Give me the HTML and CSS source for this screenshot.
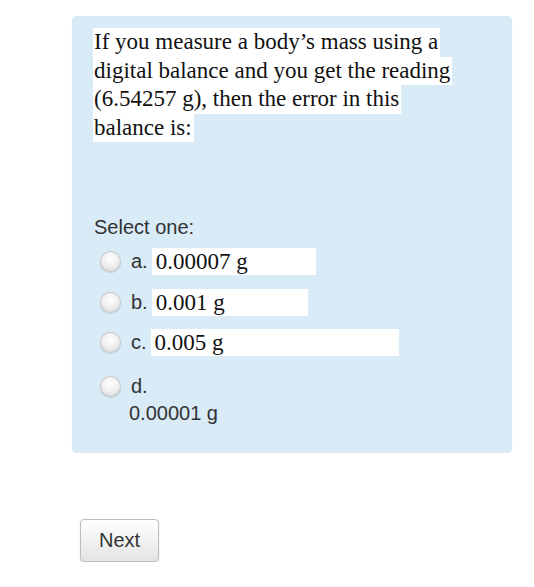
FILE: index.html
```html
<!DOCTYPE html>
<html>
<head>
<meta charset="utf-8">
<link rel="stylesheet" href="styles.css">
</head>
<body>
<div class="page">
  <div class="panel">
    <div class="question">
      <span class="qline">If you measure a body’s mass using a</span>
      <span class="qline">digital balance and you get the reading</span>
      <span class="qline">(6.54257 g), then the error in this</span>
      <span class="qline">balance is:</span>
    </div>
    <div class="prompt">Select one:</div>
    <div class="options">
      <div class="opt">
        <span class="radio"></span>
        <span class="lbl">a.</span><span class="ans w-a">0.00007 g</span>
      </div>
      <div class="opt">
        <span class="radio"></span>
        <span class="lbl">b.</span><span class="ans w-b">0.001 g</span>
      </div>
      <div class="opt">
        <span class="radio"></span>
        <span class="lbl">c.</span><span class="ans w-c">0.005 g</span>
      </div>
      <div class="opt opt-d">
        <span class="radio"></span>
        <div class="dlabel">
          <span class="lbl">d.</span>
          <span class="plain">0.00001 g</span>
        </div>
      </div>
    </div>
  </div>
  <button class="next">Next</button>
</div>
</body>
</html>
```
FILE: styles.css
```css
html, body {
  margin: 0;
  padding: 0;
  background: #ffffff;
}
.page {
  padding: 16px 0 0 72px;
  font-family: "Liberation Sans", Arial, sans-serif;
}
.panel {
  box-sizing: border-box;
  width: 440px;
  height: 436px;
  background: #d8ebf7;
  border-radius: 5px;
  padding: 12px 22px 0 21px;
  box-shadow: 0 1px 1px rgba(120, 150, 170, 0.25);
}
.question {
  display: flex;
  flex-direction: column;
  align-items: flex-start;
  font-family: "Liberation Serif", "Times New Roman", serif;
  font-size: 23px;
  color: #111111;
}
.qline {
  display: block;
  background: #ffffff;
  line-height: 28.5px;
  padding: 0 2px 0 1px;
}
.prompt {
  margin-top: 73px;
  font-size: 20px;
  line-height: 24px;
  color: #333333;
  padding-left: 1px;
}
.options {
  margin-top: 9px;
  display: flex;
  flex-direction: column;
  gap: 13.5px;
  padding-left: 7px;
}
.opt {
  display: flex;
  align-items: flex-start;
  height: 27px;
}
.opt-d {
  margin-top: 3px;
  height: auto;
}
.radio {
  flex: none;
  width: 21px;
  height: 21px;
  margin-top: 3px;
  margin-right: 10px;
  border-radius: 50%;
  background: radial-gradient(circle at 50% 35%, #ffffff 0%, #f0f0f0 45%, #cfcfcf 100%);
  box-shadow: inset 0 0 0 1px #c4c8cc, 0 1px 1px rgba(0, 0, 0, 0.12);
}
.lbl {
  font-size: 20px;
  line-height: 27px;
  color: #333333;
}
.ans {
  display: inline-block;
  box-sizing: border-box;
  margin-left: 4px;
  padding-left: 4px;
  background: #ffffff;
  font-family: "Liberation Serif", "Times New Roman", serif;
  font-size: 23px;
  line-height: 27px;
  height: 27px;
  color: #111111;
}
.w-a { width: 164px; }
.w-b { width: 156px; }
.w-c { width: 248px; }
.dlabel {
  display: flex;
  flex-direction: column;
}
.plain {
  font-size: 20px;
  line-height: 26px;
  color: #333333;
  margin-left: -2px;
}
.next {
  display: block;
  margin: 67px 0 0 8px;
  width: 79px;
  height: 43px;
  font-family: "Liberation Sans", Arial, sans-serif;
  font-size: 20px;
  color: #333333;
  background: linear-gradient(#ffffff, #e4e4e4);
  border: 1px solid #bdbdbd;
  border-radius: 4px;
  box-shadow: 0 1px 2px rgba(0, 0, 0, 0.12);
  padding: 0;
}
```
